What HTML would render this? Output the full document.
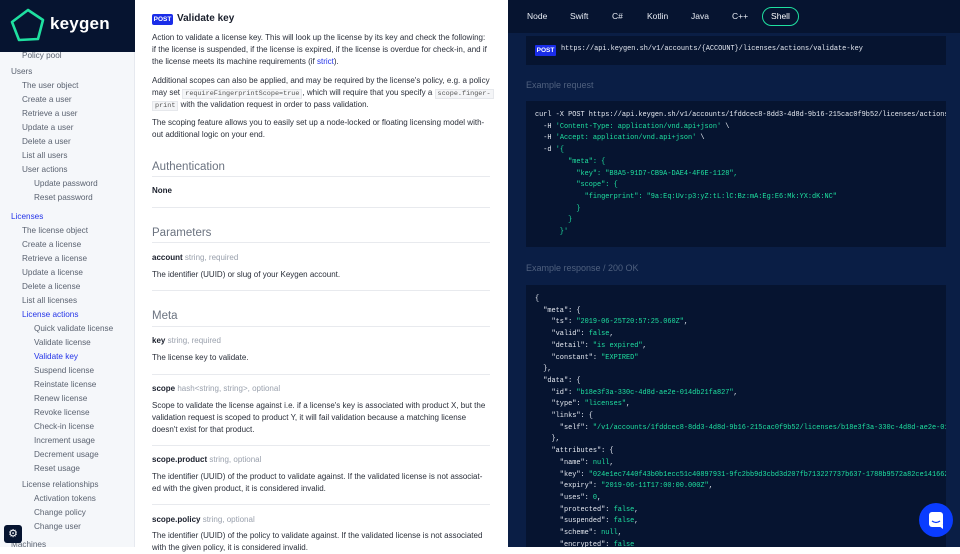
<!DOCTYPE html>
<html><head><meta charset="utf-8"><style>
*{margin:0;padding:0;box-sizing:border-box}
body{width:960px;height:547px;overflow:hidden;font-family:"Liberation Sans",sans-serif;background:#fff;position:relative}
#side{position:absolute;left:0;top:0;width:135px;height:547px;background:#f5f7fa;border-right:1px solid #e6e9ef}
#logo{position:absolute;left:0;top:0;width:135px;height:52px;background:#061430}
#side .i{position:absolute;font-size:8.2px;color:#5a6270;white-space:nowrap;line-height:12px}
#side .a{color:#2333e8}
#main .t{position:absolute;left:152px;font-size:8px;color:#2a2f3a;line-height:12px;white-space:nowrap}
#main .h{position:absolute;left:152px;font-size:11.5px;color:#6b7380;line-height:14px}
#main .r{position:absolute;left:152px;width:338px;height:1px;background:#e8eaee}
#main b{color:#1a1f2c}
#main .g{color:#9aa1ad}
code{font-family:"Liberation Mono",monospace;font-size:6.8px;background:#f4f5f7;border:1px solid #e6e8ec;padding:0 2px;color:#555}
#right{position:absolute;left:508px;top:0;width:452px;height:547px;background:#0a1e45;overflow:hidden}
#tabs{position:absolute;left:0;top:0;width:452px;height:33px;background:#061430}
#tabs span{position:absolute;top:11px;font-size:8.5px;color:#e8ecf4}
.box{position:absolute;left:18px;width:420px;background:#061430}
.code{font-family:"Liberation Mono",monospace;font-size:6.9px;color:#e6eaf2;white-space:pre;line-height:11.7px}
.s{color:#1fe0a0}
.lbl{position:absolute;left:18px;font-size:9px;color:#4f607e}
</style></head><body>
<div id="side">
<div id="logo">
<svg width="40" height="40" style="position:absolute;left:7px;top:6px" viewBox="0 0 40 40"><polygon points="21,4 36,14 31,33 12,34 5,16" fill="none" stroke="#1fe0a0" stroke-width="2.6" stroke-linejoin="round"/></svg>
<div style="position:absolute;left:50px;top:14px;font-size:17px;font-weight:bold;color:#fff;letter-spacing:.2px">keygen</div>
</div>
<div class="i" style="left:22px;top:50px">Policy pool</div>
<div class="i" style="left:11px;top:66px">Users</div>
<div class="i" style="left:22px;top:80px">The user object</div>
<div class="i" style="left:22px;top:94px">Create a user</div>
<div class="i" style="left:22px;top:108px">Retrieve a user</div>
<div class="i" style="left:22px;top:122px">Update a user</div>
<div class="i" style="left:22px;top:136px">Delete a user</div>
<div class="i" style="left:22px;top:150px">List all users</div>
<div class="i" style="left:22px;top:164px">User actions</div>
<div class="i" style="left:34px;top:178px">Update password</div>
<div class="i" style="left:34px;top:192px">Reset password</div>
<div class="i a" style="left:11px;top:211px">Licenses</div>
<div class="i" style="left:22px;top:225px">The license object</div>
<div class="i" style="left:22px;top:239px">Create a license</div>
<div class="i" style="left:22px;top:253px">Retrieve a license</div>
<div class="i" style="left:22px;top:267px">Update a license</div>
<div class="i" style="left:22px;top:281px">Delete a license</div>
<div class="i" style="left:22px;top:295px">List all licenses</div>
<div class="i a" style="left:22px;top:309px">License actions</div>
<div class="i" style="left:34px;top:323px">Quick validate license</div>
<div class="i" style="left:34px;top:337px">Validate license</div>
<div class="i a" style="left:34px;top:351px">Validate key</div>
<div class="i" style="left:34px;top:365px">Suspend license</div>
<div class="i" style="left:34px;top:379px">Reinstate license</div>
<div class="i" style="left:34px;top:393px">Renew license</div>
<div class="i" style="left:34px;top:407px">Revoke license</div>
<div class="i" style="left:34px;top:421px">Check-in license</div>
<div class="i" style="left:34px;top:435px">Increment usage</div>
<div class="i" style="left:34px;top:449px">Decrement usage</div>
<div class="i" style="left:34px;top:463px">Reset usage</div>
<div class="i" style="left:22px;top:479px">License relationships</div>
<div class="i" style="left:34px;top:493px">Activation tokens</div>
<div class="i" style="left:34px;top:507px">Change policy</div>
<div class="i" style="left:34px;top:521px">Change user</div>
<div class="i" style="left:11px;top:539px">Machines</div>
<div style="position:absolute;left:4px;top:525px;width:18px;height:18px;background:#061430;border-radius:3px;color:#fff;font-size:11px;text-align:center;line-height:18px">⚙</div>
</div>
<div id="main">
<div style="position:absolute;left:152px;top:14px;width:21px;text-align:center;background:#1a2de8;color:#fff;font-size:6.5px;font-weight:bold;border-radius:2px;line-height:11px">POST</div>
<div style="position:absolute;left:177px;top:13px;font-size:10px;font-weight:bold;color:#1a1f2c">Validate key</div>
<div class="t" style="top:32px">Action to validate a license key. This will look up the license by its key and check the following:</div>
<div class="t" style="top:44px">if the license is suspended, if the license is expired, if the license is overdue for check-in, and if</div>
<div class="t" style="top:56px">the license meets its machine requirements (if <span style="color:#2333e8">strict</span>).</div>
<div class="t" style="top:75px">Additional scopes can also be applied, and may be required by the license's policy, e.g. a policy</div>
<div class="t" style="top:87px">may set <code>requireFingerprintScope=true</code>, which will require that you specify a <code>scope.finger-</code></div>
<div class="t" style="top:99px"><code>print</code> with the validation request in order to pass validation.</div>
<div class="t" style="top:117px">The scoping feature allows you to easily set up a node-locked or floating licensing model with-</div>
<div class="t" style="top:129px">out additional logic on your end.</div>
<div class="h" style="top:160px">Authentication</div><div class="r" style="top:176px"></div>
<div class="t" style="top:185px"><b>None</b></div><div class="r" style="top:207px"></div>
<div class="h" style="top:226px">Parameters</div><div class="r" style="top:242px"></div>
<div class="t" style="top:252px"><b>account</b> <span class="g">string, required</span></div>
<div class="t" style="top:269px">The identifier (UUID) or slug of your Keygen account.</div><div class="r" style="top:290px"></div>
<div class="h" style="top:309px">Meta</div><div class="r" style="top:326px"></div>
<div class="t" style="top:335px"><b>key</b> <span class="g">string, required</span></div>
<div class="t" style="top:352px">The license key to validate.</div><div class="r" style="top:374px"></div>
<div class="t" style="top:383px"><b>scope</b> <span class="g">hash&lt;string, string&gt;, optional</span></div>
<div class="t" style="top:400px">Scope to validate the license against i.e. if a license's key is associated with product X, but the</div>
<div class="t" style="top:412px">validation request is scoped to product Y, it will fail validation because a matching license</div>
<div class="t" style="top:424px">doesn't exist for that product.</div><div class="r" style="top:445px"></div>
<div class="t" style="top:454px"><b>scope.product</b> <span class="g">string, optional</span></div>
<div class="t" style="top:471px">The identifier (UUID) of the product to validate against. If the validated license is not associat-</div>
<div class="t" style="top:483px">ed with the given product, it is considered invalid.</div><div class="r" style="top:504px"></div>
<div class="t" style="top:514px"><b>scope.policy</b> <span class="g">string, optional</span></div>
<div class="t" style="top:530px">The identifier (UUID) of the policy to validate against. If the validated license is not associated</div>
<div class="t" style="top:542px">with the given policy, it is considered invalid.</div>
</div>
<div id="right">
<div id="tabs">
<span style="left:19px">Node</span><span style="left:62px">Swift</span><span style="left:104px">C#</span><span style="left:139px">Kotlin</span><span style="left:183px">Java</span><span style="left:224px">C++</span>
<div style="position:absolute;left:254px;top:7px;width:37px;height:19px;border:1.5px solid #1fe0a0;border-radius:10px;color:#fff;font-size:8.5px;text-align:center;line-height:16px">Shell</div>
</div>
<div class="box" style="top:36px;height:29px">
<div style="position:absolute;left:9px;top:9px;width:21px;text-align:center;background:#1a2de8;color:#fff;font-size:6.5px;font-weight:bold;line-height:11px;border-radius:1px">POST</div>
<div class="code" style="position:absolute;left:35px;top:8px">https://api.keygen.sh/v1/accounts/{ACCOUNT}/licenses/actions/validate-key</div>
</div>
<div class="lbl" style="top:80px">Example request</div>
<div class="box code" style="top:101px;height:146px;padding:9px 0 0 9px;overflow:hidden">curl -X POST https://api.keygen.sh/v1/accounts/1fddcec8-8dd3-4d8d-9b16-215cac0f9b52/licenses/actions/validate-key \
  -H <span class="s">'Content-Type: application/vnd.api+json'</span> \
  -H <span class="s">'Accept: application/vnd.api+json'</span> \
  -d <span class="s">'{
        "meta": {
          "key": "B8A5-91D7-CB9A-DAE4-4F6E-1128",
          "scope": {
            "fingerprint": "9a:Eq:Uv:p3:yZ:tL:lC:Bz:mA:Eg:E6:Mk:YX:dK:NC"
          }
        }
      }'</span></div>
<div class="lbl" style="top:263px">Example response / 200 OK</div>
<div class="box code" style="top:285px;height:270px;padding:9px 0 0 9px;overflow:hidden">{
  "meta": {
    "ts": <span class="s">"2019-06-25T20:57:25.060Z"</span>,
    "valid": <span class="s">false</span>,
    "detail": <span class="s">"is expired"</span>,
    "constant": <span class="s">"EXPIRED"</span>
  },
  "data": {
    "id": <span class="s">"b18e3f3a-330c-4d8d-ae2e-014db21fa827"</span>,
    "type": <span class="s">"licenses"</span>,
    "links": {
      "self": <span class="s">"/v1/accounts/1fddcec8-8dd3-4d8d-9b16-215cac0f9b52/licenses/b18e3f3a-330c-4d8d-ae2e-014db21fa827"</span>
    },
    "attributes": {
      "name": <span class="s">null</span>,
      "key": <span class="s">"024e1ec7440f43b0b1ecc51c40897931-9fc2bb9d3cbd3d207fb713227737b637-1788b9572a82ce14166227a8d"</span>,
      "expiry": <span class="s">"2019-06-11T17:00:00.000Z"</span>,
      "uses": <span class="s">0</span>,
      "protected": <span class="s">false</span>,
      "suspended": <span class="s">false</span>,
      "scheme": <span class="s">null</span>,
      "encrypted": <span class="s">false</span></div>
<div style="position:absolute;left:411px;top:503px;width:34px;height:34px;border-radius:50%;background:#0a3cff">
<svg width="34" height="34" viewBox="0 0 34 34"><rect x="10" y="9" width="14" height="15" rx="3" fill="#fff"/><path d="M13 18q4 3 8 0" stroke="#0a3cff" stroke-width="1.3" fill="none"/><path d="M20 23l4 3v-4z" fill="#fff"/></svg>
</div>
</div>
</body></html>
